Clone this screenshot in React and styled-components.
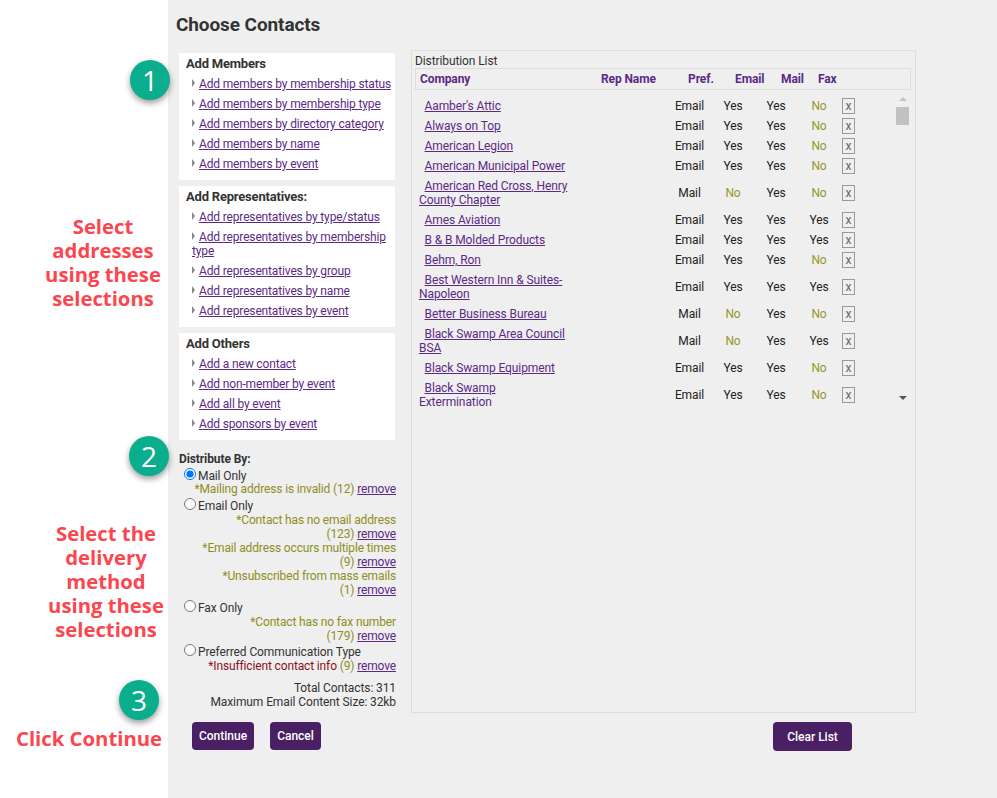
import React from 'react';
import styled, { createGlobalStyle } from 'styled-components';

const GlobalStyle = createGlobalStyle`
  html, body {
    margin: 0;
    padding: 0;
    background: #fff;
  }
  body {
    font-family: Roboto, "Liberation Sans", sans-serif;
    font-size: 12px;
    line-height: 14px;
    letter-spacing: -0.1px;
    color: #333;
  }
`;

const Page = styled.div`
  display: flex;
  width: 997px;
  height: 798px;
  overflow: hidden;
`;

const Sidebar = styled.aside`
  position: relative;
  z-index: 1;
  flex: 0 0 167px;
  display: flex;
  flex-direction: column;
  padding-top: 214px;
  box-sizing: border-box;
`;

const Badge = styled.div`
  position: absolute;
  left: ${props => props.$left}px;
  top: ${props => props.$top}px;
  width: 40px;
  height: 40px;
  border-radius: 50%;
  background: #0aae8c;
  box-shadow: 0 3px 6px rgba(0, 0, 0, 0.4);
  color: #fff;
  font-family: "Open Sans", sans-serif;
  font-size: 28px;
  line-height: 40px;
  letter-spacing: 0;
  text-align: center;
`;

const Hint = styled.div`
  width: ${props => props.$width || 124}px;
  margin-left: ${props => props.$left}px;
  margin-top: ${props => props.$top || 0}px;
  color: #fb4650;
  font-family: "Open Sans", sans-serif;
  font-size: 20.3px;
  font-weight: 700;
  line-height: 24px;
  letter-spacing: 0;
  text-align: center;
  white-space: ${props => (props.$nowrap ? 'nowrap' : 'normal')};
`;

const Main = styled.main`
  flex: 1;
  background: #efefef;
  padding: 14px 0 0 8px;
  box-sizing: border-box;
`;

const Title = styled.h1`
  margin: 0 0 14px;
  font-size: 19px;
  font-weight: 700;
  line-height: 22px;
  color: #333;
`;

const Columns = styled.div`
  display: flex;
  align-items: flex-start;
  padding-left: 3px;
  gap: 15px;
`;

const LeftColumn = styled.div`
  width: 217px;
  padding-top: 3px;
`;

const MenuBox = styled.section`
  width: 216px;
  box-sizing: border-box;
  background: #fff;
  padding: 4px 0 6px 7px;
  margin-bottom: 6px;
`;

const MenuTitle = styled.h3`
  margin: 0 0 3px;
  font-size: 13px;
  font-weight: 700;
  line-height: 14px;
  letter-spacing: -0.2px;
  color: #333;
`;

const MenuList = styled.ul`
  margin: 0;
  padding: 0;
  list-style: none;
`;

const MenuItem = styled.li`
  padding: 3px 0 3px 6px;
  letter-spacing: -0.15px;
  &::before {
    content: '';
    display: inline-block;
    width: 0;
    height: 0;
    margin-right: 4px;
    vertical-align: 1px;
    border-top: 4px solid transparent;
    border-bottom: 4px solid transparent;
    border-left: 3px solid #888;
  }
`;

const TextLink = styled.a`
  color: #5c2a86;
  text-decoration: underline;
  cursor: pointer;
`;

const DistributeTitle = styled.div`
  margin: 12px 0 3px;
  font-weight: 700;
  color: #333;
`;

const RadioLabel = styled.label`
  display: flex;
  align-items: flex-start;
  margin-top: ${props => props.$top || 0}px;
`;

const Radio = styled.input.attrs({ type: 'radio' })`
  width: 12px;
  height: 12px;
  margin: -1.5px 2px 0 5px;
`;

const Warning = styled.div`
  margin-top: ${props => props.$top || 0}px;
  padding-left: 6px;
  text-align: right;
  letter-spacing: -0.14px;
  color: ${props => (props.$danger ? '#8c0f1e' : '#8e8e22')};
`;

const Count = styled.span`
  white-space: nowrap;
  color: #8e8e22;
`;

const Totals = styled.div`
  margin-top: 8px;
  text-align: right;
`;

const ButtonRow = styled.div`
  display: flex;
  gap: 16px;
  margin: 13px 0 0 13px;
`;

const ActionButton = styled.button`
  width: ${props => props.$width}px;
  height: ${props => props.$height || 28}px;
  padding: 0;
  border: 0;
  border-radius: 4px;
  background: #4a1f63;
  color: #fff;
  font-family: Roboto, sans-serif;
  font-size: 12px;
  font-weight: 500;
  cursor: pointer;
`;

const RightColumn = styled.div`
  width: 505px;
`;

const Panel = styled.section`
  height: 663px;
  box-sizing: border-box;
  border: 1px solid #ddd;
  padding: 3px 4px 0 3px;
`;

const PanelLabel = styled.div``;

const HeaderRow = styled.div`
  display: grid;
  grid-template-columns: 181px 87px 47px 46px 37px 1fr;
  align-items: center;
  height: 22px;
  box-sizing: border-box;
  padding-left: 4px;
  border: 1px solid #ddd;
  font-weight: 700;
  color: #5c2a86;
`;

const ListArea = styled.div`
  display: flex;
  height: 310px;
  margin-top: 6px;
  padding-left: 4px;
  overflow: hidden;
`;

const Rows = styled.div`
  flex: 0 0 477px;
`;

const Row = styled.div`
  display: grid;
  grid-template-columns: 152px 94px 49px 38px 48px 38px 17px;
  align-items: center;
  color: #222;
`;

const CompanyCell = styled.div`
  padding: 3px 0;
  text-indent: 5.5px;
`;

const Cell = styled.div`
  text-align: center;
  color: ${props => (props.$muted ? '#96962c' : '#222')};
`;

const RemoveButton = styled.button`
  width: 13px;
  height: 16px;
  margin-left: 4px;
  padding: 0;
  box-sizing: border-box;
  border: 1px solid #999;
  background: transparent;
  color: #666;
  font-family: Roboto, sans-serif;
  font-size: 12px;
  line-height: 12px;
`;

const Scrollbar = styled.div`
  flex: 0 0 13px;
  display: flex;
  flex-direction: column;
  align-items: center;
  padding-top: 1px;
`;

const ScrollArrow = styled.div`
  width: 0;
  height: 0;
  margin-top: ${props => props.$top || 0}px;
  border-left: 4px solid transparent;
  border-right: 4px solid transparent;
  border-bottom: ${props => (props.$down ? '0' : '4px solid #c4c4c4')};
  border-top: ${props => (props.$down ? '4px solid #555' : '0')};
`;

const ScrollThumb = styled.div`
  width: 13px;
  height: 18px;
  margin-top: 6px;
  background: #c1c1c1;
`;

const ClearRow = styled.div`
  margin: 9px 0 0 362px;
`;

const groups = [
  {
    title: 'Add Members',
    links: [
      'Add members by membership status',
      'Add members by membership type',
      'Add members by directory category',
      'Add members by name',
      'Add members by event',
    ],
  },
  {
    title: 'Add Representatives:',
    links: [
      'Add representatives by type/status',
      'Add representatives by membership type',
      'Add representatives by group',
      'Add representatives by name',
      'Add representatives by event',
    ],
  },
  {
    title: 'Add Others',
    links: [
      'Add a new contact',
      'Add non-member by event',
      'Add all by event',
      'Add sponsors by event',
    ],
  },
];

const contacts = [
  ["Aamber's Attic", 'Email', 'Yes', 'Yes', 'No'],
  ['Always on Top', 'Email', 'Yes', 'Yes', 'No'],
  ['American Legion', 'Email', 'Yes', 'Yes', 'No'],
  ['American Municipal Power', 'Email', 'Yes', 'Yes', 'No'],
  ['American Red Cross, Henry County Chapter', 'Mail', 'No', 'Yes', 'No'],
  ['Ames Aviation', 'Email', 'Yes', 'Yes', 'Yes'],
  ['B & B Molded Products', 'Email', 'Yes', 'Yes', 'Yes'],
  ['Behm, Ron', 'Email', 'Yes', 'Yes', 'No'],
  ['Best Western Inn & Suites-Napoleon', 'Email', 'Yes', 'Yes', 'Yes'],
  ['Better Business Bureau', 'Mail', 'No', 'Yes', 'No'],
  ['Black Swamp Area Council BSA', 'Mail', 'No', 'Yes', 'Yes'],
  ['Black Swamp Equipment', 'Email', 'Yes', 'Yes', 'No'],
  ['Black Swamp Extermination', 'Email', 'Yes', 'Yes', 'No'],
];

const Flag = ({ value }) => <Cell $muted={value === 'No'}>{value}</Cell>;

const Notice = ({ text, count, danger, top }) => (
  <Warning $danger={danger} $top={top}>
    {text}{' '}
    <Count>
      {count} <TextLink>remove</TextLink>
    </Count>
  </Warning>
);

const App = () => (
  <Page>
    <GlobalStyle />
    <Sidebar>
      <Badge $left={130} $top={60}>1</Badge>
      <Badge $left={129} $top={436}>2</Badge>
      <Badge $left={119} $top={680}>3</Badge>
      <Hint $left={41}>Select addresses using these selections</Hint>
      <Hint $left={44} $top={211}>Select the delivery method using these selections</Hint>
      <Hint $left={16} $top={85} $width={146} $nowrap>Click Continue</Hint>
    </Sidebar>
    <Main>
      <Title>Choose Contacts</Title>
      <Columns>
        <LeftColumn>
          {groups.map(group => (
            <MenuBox key={group.title}>
              <MenuTitle>{group.title}</MenuTitle>
              <MenuList>
                {group.links.map(link => (
                  <MenuItem key={link}>
                    <TextLink>{link}</TextLink>
                  </MenuItem>
                ))}
              </MenuList>
            </MenuBox>
          ))}
          <DistributeTitle>Distribute By:</DistributeTitle>
          <RadioLabel>
            <Radio name="distribute" defaultChecked />
            Mail Only
          </RadioLabel>
          <Notice text="*Mailing address is invalid" count="(12)" top={-1} />
          <RadioLabel $top={3}>
            <Radio name="distribute" />
            Email Only
          </RadioLabel>
          <Notice text="*Contact has no email address" count="(123)" />
          <Notice text="*Email address occurs multiple times" count="(9)" />
          <Notice text="*Unsubscribed from mass emails" count="(1)" />
          <RadioLabel $top={4}>
            <Radio name="distribute" />
            Fax Only
          </RadioLabel>
          <Notice text="*Contact has no fax number" count="(179)" />
          <RadioLabel $top={2}>
            <Radio name="distribute" />
            Preferred Communication Type
          </RadioLabel>
          <Notice text="*Insufficient contact info" count="(9)" danger />
          <Totals>
            Total Contacts: 311
            <br />
            Maximum Email Content Size: 32kb
          </Totals>
          <ButtonRow>
            <ActionButton $width={62}>Continue</ActionButton>
            <ActionButton $width={51}>Cancel</ActionButton>
          </ButtonRow>
        </LeftColumn>
        <RightColumn>
          <Panel>
            <PanelLabel>Distribution List</PanelLabel>
            <HeaderRow>
              <span>Company</span>
              <span>Rep Name</span>
              <span>Pref.</span>
              <span>Email</span>
              <span>Mail</span>
              <span>Fax</span>
            </HeaderRow>
            <ListArea>
              <Rows>
                {contacts.map(([name, pref, email, mail, fax]) => (
                  <Row key={name}>
                    <CompanyCell>
                      <TextLink>{name}</TextLink>
                    </CompanyCell>
                    <span />
                    <Cell>{pref}</Cell>
                    <Flag value={email} />
                    <Flag value={mail} />
                    <Flag value={fax} />
                    <RemoveButton>x</RemoveButton>
                  </Row>
                ))}
              </Rows>
              <Scrollbar>
                <ScrollArrow />
                <ScrollThumb />
                <ScrollArrow $down $top={271} />
              </Scrollbar>
            </ListArea>
          </Panel>
          <ClearRow>
            <ActionButton $width={79} $height={29}>Clear List</ActionButton>
          </ClearRow>
        </RightColumn>
      </Columns>
    </Main>
  </Page>
);

export default App;
